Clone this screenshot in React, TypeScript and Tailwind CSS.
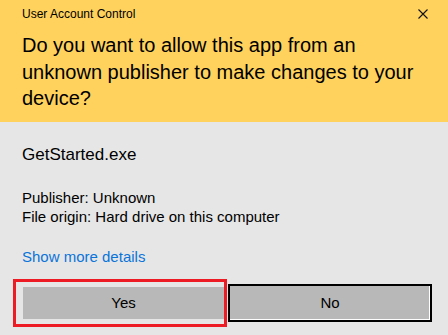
const font = { fontFamily: '"Liberation Sans", Arial, sans-serif' };

export default function App() {
  return (
    <div className="w-[448px] h-[335px] bg-[#e6e6e6] text-black overflow-hidden" style={font}>
      {/* Header */}
      <div className="h-[122px] bg-[#ffd25e] pl-[22px] pr-[20px]">
        <div className="flex items-center justify-between pt-[5px]">
          <span className="text-[12px] leading-[18px]">User Account Control</span>
          <svg width="10" height="10" viewBox="0 0 10 10">
            <path d="M0.5 0.5 L9.5 9.5 M9.5 0.5 L0.5 9.5" stroke="#111" strokeWidth="1.1" />
          </svg>
        </div>
        <h1 className="mt-[9px] text-[20px] leading-[26.5px] font-normal pr-[10px]">
          Do you want to allow this app from an unknown publisher to make changes to your device?
        </h1>
      </div>

      {/* Body */}
      <div className="pl-[22px] pt-[22px]">
        <div className="text-[17px] leading-[22px]">GetStarted.exe</div>
        <div className="mt-[23px] text-[15px] leading-[18.5px]">
          <div>Publisher: Unknown</div>
          <div>File origin: Hard drive on this computer</div>
        </div>
        <div className="mt-[22px] text-[15px] leading-[18px] text-[#0a74da]">Show more details</div>
      </div>

      {/* Buttons */}
      <div className="mt-[13px] flex items-center">
        <div className="ml-[13px] w-[214px] h-[48px] border-[3px] border-[#ed1c24] pl-[7px] py-[5px] flex">
          <button className="flex-1 bg-[#b8b8b8] text-[15px] flex items-center justify-center">Yes</button>
        </div>
        <button className="ml-[1px] w-[204px] h-[38px] border-2 border-black bg-[#b8b8b8] shadow-[inset_-1px_-1px_0_#ffffff] text-[15px] flex items-center justify-center">
          No
        </button>
      </div>
    </div>
  );
}
